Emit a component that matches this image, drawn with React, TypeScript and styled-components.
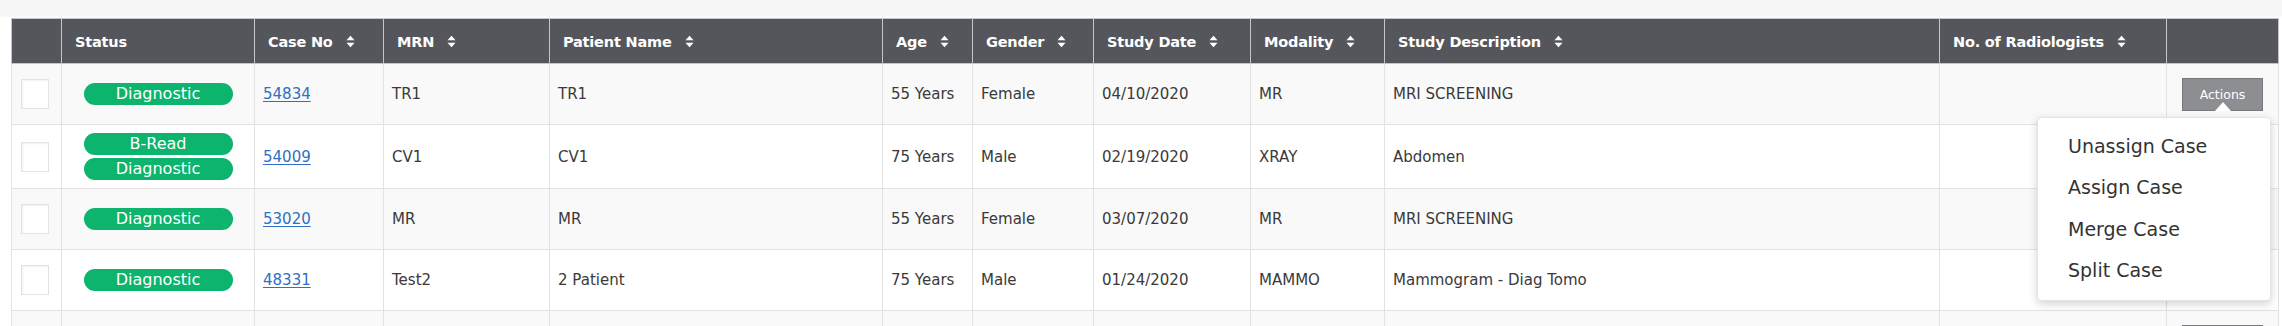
import React from "react";
import styled, { createGlobalStyle } from "styled-components";

const GlobalStyle = createGlobalStyle`
  html, body {
    margin: 0;
    padding: 0;
    overflow: hidden;
    background: #ffffff;
  }
  body {
    font-family: "DejaVu Sans", "Liberation Sans", sans-serif;
    color: #3a3a3a;
  }
`;

type Column = { key: string; title: string; width: number; sortable: boolean };

const columns: Column[] = [
  { key: "select", title: "", width: 50, sortable: false },
  { key: "status", title: "Status", width: 193, sortable: false },
  { key: "caseNo", title: "Case No", width: 129, sortable: true },
  { key: "mrn", title: "MRN", width: 166, sortable: true },
  { key: "patient", title: "Patient Name", width: 333, sortable: true },
  { key: "age", title: "Age", width: 90, sortable: true },
  { key: "gender", title: "Gender", width: 121, sortable: true },
  { key: "date", title: "Study Date", width: 157, sortable: true },
  { key: "modality", title: "Modality", width: 134, sortable: true },
  { key: "desc", title: "Study Description", width: 555, sortable: true },
  { key: "radiologists", title: "No. of Radiologists", width: 227, sortable: true },
  { key: "actions", title: "", width: 112, sortable: false },
];

type CaseRow = {
  id: number;
  status: string[];
  caseNo: string;
  mrn: string;
  patient: string;
  age: string;
  gender: string;
  date: string;
  modality: string;
  desc: string;
  radiologists: string;
};

const rows: CaseRow[] = [
  { id: 1, status: ["Diagnostic"], caseNo: "54834", mrn: "TR1", patient: "TR1", age: "55 Years", gender: "Female", date: "04/10/2020", modality: "MR", desc: "MRI SCREENING", radiologists: "" },
  { id: 2, status: ["B-Read", "Diagnostic"], caseNo: "54009", mrn: "CV1", patient: "CV1", age: "75 Years", gender: "Male", date: "02/19/2020", modality: "XRAY", desc: "Abdomen", radiologists: "" },
  { id: 3, status: ["Diagnostic"], caseNo: "53020", mrn: "MR", patient: "MR", age: "55 Years", gender: "Female", date: "03/07/2020", modality: "MR", desc: "MRI SCREENING", radiologists: "" },
  { id: 4, status: ["Diagnostic"], caseNo: "48331", mrn: "Test2", patient: "2 Patient", age: "75 Years", gender: "Male", date: "01/24/2020", modality: "MAMMO", desc: "Mammogram - Diag Tomo", radiologists: "" },
  // next row only peeks in at the bottom edge
  { id: 5, status: [], caseNo: "", mrn: "", patient: "", age: "", gender: "", date: "", modality: "", desc: "", radiologists: "" },
];

const menuItems = ["Unassign Case", "Assign Case", "Merge Case", "Split Case"];

const SortIcon = () => (
  <svg width="9" height="13" viewBox="0 0 9 13">
    <path d="M0.5 5.3 L4.5 0.8 L8.5 5.3 Z" fill="#ffffff" />
    <path d="M0.5 7.7 L4.5 12.2 L8.5 7.7 Z" fill="#ffffff" />
  </svg>
);

const App = () => {
  return (
    <Page>
      <GlobalStyle />
      <TopBar />
      <TableWrap>
        <Table>
          <colgroup>
            {columns.map((c) => (
              <col key={c.key} style={{ width: c.width }} />
            ))}
          </colgroup>
          <thead>
            <tr>
              {columns.map((c) => (
                <HeadCell key={c.key}>
                  {c.title && (
                    <HeadLabel>
                      {c.title}
                      {c.sortable && <SortIcon />}
                    </HeadLabel>
                  )}
                </HeadCell>
              ))}
            </tr>
          </thead>
          <tbody>
            {rows.map((r, i) => (
              <Row key={r.id} $striped={i % 2 === 0}>
                <CheckCell>
                  <CheckBox />
                </CheckCell>
                <StatusCell>
                  <BadgeStack>
                    {r.status.map((s) => (
                      <Badge key={s}>{s}</Badge>
                    ))}
                  </BadgeStack>
                </StatusCell>
                <Cell>
                  {r.caseNo && <CaseLink href="#">{r.caseNo}</CaseLink>}
                </Cell>
                <Cell>{r.mrn}</Cell>
                <Cell>{r.patient}</Cell>
                <Cell>{r.age}</Cell>
                <Cell>{r.gender}</Cell>
                <Cell>{r.date}</Cell>
                <Cell>{r.modality}</Cell>
                <Cell>{r.desc}</Cell>
                <Cell>{r.radiologists}</Cell>
                <ActionCell>
                  <ActionsWrap>
                    <ActionsButton $open={i === 0}>Actions</ActionsButton>
                    {i === 0 && (
                      <Menu>
                        {menuItems.map((m) => (
                          <MenuItem key={m}>{m}</MenuItem>
                        ))}
                      </Menu>
                    )}
                  </ActionsWrap>
                </ActionCell>
              </Row>
            ))}
          </tbody>
        </Table>
      </TableWrap>
    </Page>
  );
};

export default App;

const Page = styled.div`
  width: 2282px;
  height: 326px;
  overflow: hidden;
  background: #ffffff;
`;

const TopBar = styled.div`
  height: 16px;
  background: #f7f7f7;
  box-shadow: 0 1px 2px rgba(0, 0, 0, 0.04);
`;

const TableWrap = styled.div`
  padding: 2px 4px 0 11px;
`;

const Table = styled.table`
  width: 2267px;
  table-layout: fixed;
  border-collapse: collapse;
`;

const HeadCell = styled.th`
  height: 44px;
  padding: 0 13px;
  background: #55565b;
  border: 1px solid #c4c5c8;
  text-align: left;
  vertical-align: middle;
  white-space: nowrap;
`;

const HeadLabel = styled.span`
  display: inline-flex;
  align-items: center;
  gap: 13px;
  color: #ffffff;
  font-size: 14.5px;
  font-weight: 700;
  letter-spacing: -0.2px;
`;

const Row = styled.tr<{ $striped: boolean }>`
  background: ${(p) => (p.$striped ? "#f9f9f9" : "#ffffff")};
`;

const Cell = styled.td`
  height: 44px;
  padding: 8px 8px;
  border: 1px solid #e2e2e2;
  vertical-align: middle;
  font-size: 15px;
  color: #3a3a3a;
  white-space: nowrap;
`;

const CheckCell = styled(Cell)`
  padding: 8px 0 8px 9px;
`;

const CheckBox = styled.div`
  width: 26px;
  height: 28px;
  background: #ffffff;
  border: 1px solid #e3e3e3;
  box-shadow: inset 1px 1px 2px rgba(0, 0, 0, 0.06);
`;

const StatusCell = styled(Cell)`
  padding: 8px 0;
`;

const BadgeStack = styled.div`
  display: flex;
  flex-direction: column;
  align-items: center;
  gap: 3px;
`;

const Badge = styled.span`
  width: 149px;
  height: 22px;
  border-radius: 11px;
  background: #0cb46e;
  color: #ffffff;
  font-size: 16px;
  line-height: 22px;
  text-align: center;
`;

const CaseLink = styled.a`
  color: #2f6fc4;
  text-decoration: underline;
  text-underline-offset: 2px;
`;

const ActionCell = styled(Cell)`
  padding: 8px 0;
  text-align: center;
`;

const ActionsWrap = styled.div`
  position: relative;
  display: inline-block;
`;

const ActionsButton = styled.button<{ $open: boolean }>`
  position: relative;
  display: block;
  width: 81px;
  height: 33px;
  padding: 0;
  background: #8d8e92;
  border: 1px solid #77787c;
  color: #ffffff;
  font-family: "DejaVu Sans", "Liberation Sans", sans-serif;
  font-size: 12.5px;
  cursor: pointer;

  &::after {
    content: "";
    display: ${(p) => (p.$open ? "block" : "none")};
    position: absolute;
    bottom: -1px;
    left: 50%;
    transform: translateX(-50%);
    border-left: 8px solid transparent;
    border-right: 8px solid transparent;
    border-bottom: 9px solid #ffffff;
  }
`;

const Menu = styled.div`
  position: absolute;
  top: calc(100% + 6px);
  right: -8px;
  z-index: 10;
  width: 234px;
  padding: 8px 0;
  box-sizing: border-box;
  background: #ffffff;
  border: 1px solid #e4e4e4;
  border-radius: 4px;
  box-shadow: 0 3px 10px rgba(0, 0, 0, 0.18);
  text-align: left;
`;

const MenuItem = styled.div`
  height: 41.5px;
  line-height: 41.5px;
  padding: 0 30px;
  font-size: 19px;
  color: #333333;
  cursor: pointer;
`;
